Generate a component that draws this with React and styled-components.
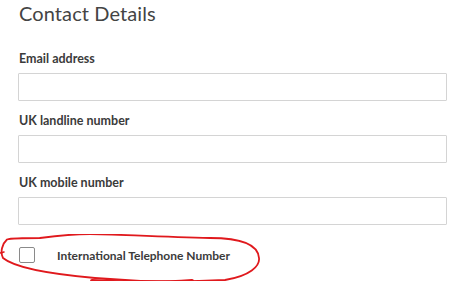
import React from "react";
import styled, { createGlobalStyle } from "styled-components";

const GlobalStyle = createGlobalStyle`
  html, body {
    margin: 0;
    padding: 0;
    background: #ffffff;
  }
  body {
    font-family: "Lato", "Open Sans", sans-serif;
    color: #3f3f3f;
  }
`;

const fields = [
  { id: "email", label: "Email address" },
  { id: "landline", label: "UK landline number" },
  { id: "mobile", label: "UK mobile number" },
];

// hand drawn red ring round the checkbox row
function Scribble() {
  return (
    <Ring viewBox="0 0 474 60" preserveAspectRatio="none">
      <path
        d="M40 4 C 25 4, 12 4, 7 5.5 C 2 10, 0 18, 3 24 C 15 34, 50 40, 95 44 C 140 48, 190 48, 225 46 C 250 42, 260 32, 259 24 C 258 10, 240 4, 210 4 C 160 3, 110 0, 90 0 C 70 0, 55 2, 40 4"
        fill="none"
        stroke="#e0191d"
        strokeWidth="1.8"
        strokeLinecap="round"
      />
      <path
        d="M4 18 L 0 19"
        fill="none"
        stroke="#e0191d"
        strokeWidth="1.5"
        strokeLinecap="round"
      />
      <path
        d="M92 47 C 130 49, 165 49, 192 47"
        fill="none"
        stroke="#e0191d"
        strokeWidth="4"
        strokeLinecap="round"
      />
    </Ring>
  );
}

function App() {
  return (
    <>
      <GlobalStyle />
      <Page>
        <Title>Contact Details</Title>
        <Fields>
          {fields.map((f) => (
            <Field key={f.id}>
              <Label htmlFor={f.id}>{f.label}</Label>
              <Input id={f.id} type="text" />
            </Field>
          ))}
        </Fields>
        <CheckRow>
          <Box type="checkbox" id="intl" />
          <CheckLabel htmlFor="intl">International Telephone Number</CheckLabel>
          <Scribble />
        </CheckRow>
      </Page>
    </>
  );
}

export default App;

const Page = styled.div`
  width: 474px;
  height: 281px;
  overflow: hidden;
  padding: 0 0 0 18px;
  box-sizing: border-box;
`;

const Title = styled.h1`
  margin: 0;
  padding-top: 1px;
  padding-left: 1px;
  font-size: 20px;
  line-height: 24px;
  font-weight: 400;
  color: #444444;
  letter-spacing: 0.1px;
`;

const Fields = styled.div`
  display: flex;
  flex-direction: column;
  gap: 12px;
  margin-top: 26px;
`;

const Field = styled.div`
  display: flex;
  flex-direction: column;
  gap: 7px;
`;

const Label = styled.label`
  font-size: 12.5px;
  line-height: 15px;
  font-weight: 700;
  color: #3b3b3b;
  padding-left: 1px;
`;

const Input = styled.input`
  width: 429px;
  height: 28px;
  box-sizing: border-box;
  border: 1px solid #d4d4d4;
  border-radius: 1px;
  background: #ffffff;
  margin: 0;
  outline: none;
`;

const CheckRow = styled.div`
  position: relative;
  display: flex;
  align-items: center;
  margin-top: 22px;
  padding-left: 1px;
  height: 16px;
`;

const Box = styled.input`
  appearance: none;
  width: 16px;
  height: 16px;
  margin: 0;
  border: 1px solid #8a8a8a;
  border-radius: 2px;
  box-sizing: border-box;
  background: #fff;
`;

const CheckLabel = styled.label`
  margin-left: 22px;
  font-size: 12px;
  font-weight: 700;
  color: #3b3b3b;
`;

const Ring = styled.svg`
  position: absolute;
  left: -18px;
  top: -13px;
  width: 474px;
  height: 60px;
  pointer-events: none;
`;
